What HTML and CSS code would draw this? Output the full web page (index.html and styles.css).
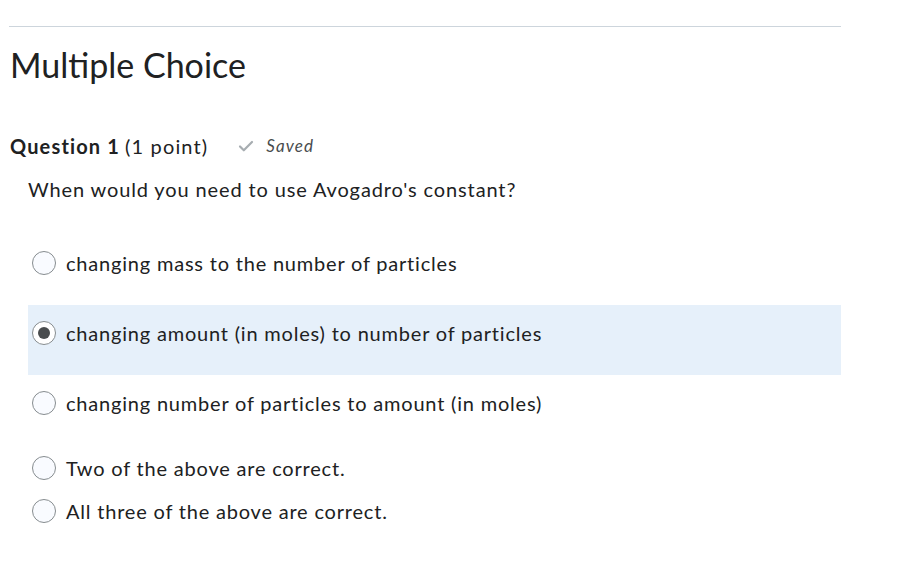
FILE: index.html
```html
<!DOCTYPE html>
<html lang="en">
<head>
    <meta charset="UTF-8">
    <title>Multiple Choice</title>
    <link rel="stylesheet" href="styles.css">
</head>
<body>
    <div class="quiz">
        <h2 class="section-title">Multiple Choice</h2>

        <div class="question-head">
            <span class="q-num">Question 1</span>
            <span class="q-points">(1 point)</span>
            <span class="saved">
                <svg width="16" height="16" viewBox="0 0 16 16"><path d="M2 8.5l3.8 3.8L14 4" fill="none" stroke="#a7adb1" stroke-width="2.2" stroke-linecap="round" stroke-linejoin="round"/></svg>
                <em>Saved</em>
            </span>
        </div>

        <p class="question-text">When would you need to use Avogadro's constant?</p>

        <div class="options">
            <label class="option tall">
                <span class="radio"></span>
                <span>changing mass to the number of particles</span>
            </label>
            <label class="option tall selected">
                <span class="radio checked"></span>
                <span>changing amount (in moles) to number of particles</span>
            </label>
            <label class="option tall">
                <span class="radio"></span>
                <span>changing number of particles to amount (in moles)</span>
            </label>
            <label class="option short">
                <span class="radio"></span>
                <span>Two of the above are correct.</span>
            </label>
            <label class="option short">
                <span class="radio"></span>
                <span>All three of the above are correct.</span>
            </label>
        </div>
    </div>
</body>
</html>
```

FILE: styles.css
```css
* {
    margin: 0;
    padding: 0;
    box-sizing: border-box;
}

body {
    background: #fff;
    color: #202122;
    font-family: Lato, 'Open Sans', sans-serif;
}

.quiz {
    width: 841px;
    padding: 26px 0 0 9px;
}

.section-title {
    border-top: 1px solid #cdd5dc;
    font-size: 34px;
    font-weight: 400;
    line-height: 40px;
    padding: 18px 0 0 1px;
}

.question-head {
    display: flex;
    align-items: center;
    margin-top: 48px;
    padding-left: 1px;
    font-size: 20px;
    line-height: 26px;
    letter-spacing: 1.15px;
}

.q-num {
    font-weight: 700;
}

.q-points {
    margin-left: 5px;
}

.saved {
    display: flex;
    align-items: center;
    margin-left: 30px;
    color: #494c4e;
    font-size: 17px;
    letter-spacing: 1.1px;
}

.saved svg {
    margin-right: 12px;
}

.question-text {
    margin-top: 17px;
    padding-left: 19px;
    font-size: 20px;
    line-height: 26px;
    letter-spacing: 0.87px;
}

.options {
    margin-top: 33px;
    margin-left: 19px;
}

.option {
    display: flex;
    align-items: flex-start;
    font-size: 20px;
    line-height: 26px;
    letter-spacing: 0.8px;
    padding-left: 4px;
}

.option.tall {
    height: 70px;
    padding-top: 15px;
}

.option.short {
    height: 43px;
    padding-top: 10px;
}

.option.selected {
    background: #e6f0fa;
}

.radio {
    width: 24px;
    height: 24px;
    margin-top: 1px;
    border: 1px solid #868c8f;
    border-radius: 50%;
    background: #f9fbff;
    margin-right: 10px;
    flex-shrink: 0;
    display: flex;
    align-items: center;
    justify-content: center;
}

.radio.checked {
    background: #fff;
}

.radio.checked::after {
    content: "";
    width: 12px;
    height: 12px;
    border-radius: 50%;
    background: #494c4e;
}
```
